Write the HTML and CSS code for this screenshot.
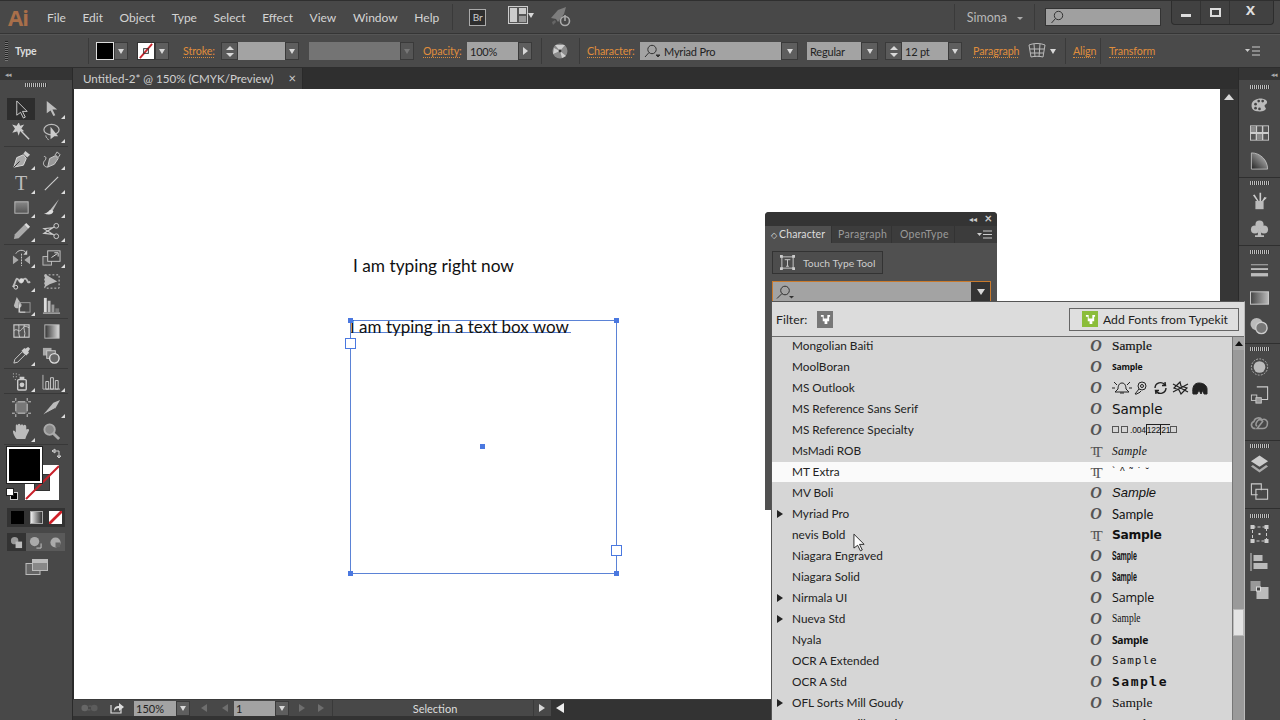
FILE: index.html
```html
<!DOCTYPE html>
<html lang="en">
<head>
<meta charset="utf-8">
<title>Illustrator</title>
<link rel="stylesheet" href="styles.css">
</head>
<body>
<div class="app">
  <header class="titlebar">
    <div class="logo">Ai</div>
    <nav class="menu"><span>File</span><span>Edit</span><span>Object</span><span>Type</span><span>Select</span><span>Effect</span><span>View</span><span>Window</span><span>Help</span></nav>
    <i class="vsep s1"></i>
    <div class="br">Br</div>
    <svg class="layout" viewBox="0 0 20 18"><rect x=".5" y=".5" width="19" height="17" fill="#555" stroke="#ccc"/><rect x="2" y="2" width="7" height="14" fill="#ccc"/><rect x="11" y="2" width="7" height="6" fill="#ccc"/><rect x="11" y="10" width="7" height="6" fill="#999"/></svg>
    <i class="tri lt"></i>
    <svg class="rocket" viewBox="0 0 22 20"><path d="M2 11 9 3l8-3-2 7-6 8-2-3z" fill="#7d7d7d"/><path d="M3 15l3-2 1 2-3 3z" fill="#666"/><circle cx="16" cy="14" r="4.500" fill="none" stroke="#aaa" stroke-width="1.600"/><path d="M16 8v6" stroke="#aaa" stroke-width="1.600"/></svg>
    <div class="grow"></div>
    <i class="vsep"></i>
    <span class="user">Simona</span><i class="tri tiny"></i>
    <i class="vsep s2"></i>
    <div class="search"><svg viewBox="0 0 14 14" class="glass"><circle cx="8.500" cy="5.500" r="4.200" fill="none" stroke="#333"/><path d="M5.500 8.500 1.500 13" stroke="#333"/></svg></div>
    <div class="winbtns">
      <div class="wb"><i class="w-min"></i></div>
      <div class="wb"><i class="w-max"></i></div>
      <div class="wb wx">x</div>
    </div>
  </header>

  <div class="controlbar">
    <i class="grip-v"></i>
    <span class="ctl-type">Type</span>
    <i class="vsep c1"></i>
    <div class="sw black"></div><div class="dd"><i class="tri"></i></div>
    <div class="sw none"><svg viewBox="0 0 17 17"><path d="M2 16 15 1" stroke="#c8242b" stroke-width="2"/><rect x="6" y="6" width="5" height="5" fill="none" stroke="#333"/></svg></div><div class="dd"><i class="tri"></i></div>
    <a class="lnk l31 m14">Stroke:</a>
    <div class="spin m7"><i class="tri up"></i><i class="tri"></i></div>
    <div class="fld w47"></div><div class="dd"><i class="tri"></i></div>
    <div class="fld dim w91 m10"></div><div class="dd dimdd"><i class="tri"></i></div>
    <a class="lnk l37 m9">Opacity:</a>
    <div class="fld w51 m7">100%</div><div class="dd"><i class="tri right"></i></div>
    <i class="vsep m9"></i>
    <svg class="globe" viewBox="0 0 16 16"><circle cx="8" cy="8" r="7.500" fill="#8a8a8a"/><path d="M8 8 3 2h10zM8 8l6 5-4 2zM8 8 1 11 2 5z" fill="#cfcfcf"/><circle cx="8" cy="8" r="1.400" fill="#333"/></svg>
    <i class="vsep m11"></i>
    <a class="lnk l45 m7">Character:</a>
    <div class="fld w141 m8"><svg viewBox="0 0 18 14" class="glass2"><circle cx="9" cy="5.500" r="4.200" fill="none" stroke="#333"/><path d="M6 8.500 2 13M13 11h4l-2 2z" stroke="#333" fill="#333"/></svg>Myriad Pro</div><div class="dd d17"><i class="tri"></i></div>
    <div class="fld w54 m9">Regular</div><div class="dd d17"><i class="tri"></i></div>
    <div class="spin m7"><i class="tri up"></i><i class="tri"></i></div>
    <div class="fld w46">12 pt</div><div class="dd"><i class="tri"></i></div>
    <a class="lnk l45 m11">Paragraph</a>
    <svg class="arc" viewBox="0 0 18 16"><path d="M1 2c5-2 11-2 16 0l-2 12c-4-1-8-1-12 0zM6 1l1 13M12 1l-1 13M2 6h14M2.500 10h13" fill="none" stroke="#bbb"/></svg>
    <i class="tri lt2"></i>
    <i class="vsep m9"></i>
    <a class="lnk l22 m7">Align</a>
    <i class="vsep m5"></i>
    <a class="lnk l44 m8">Transform</a>
    <div class="grow"></div>
    <svg class="panelmenu" viewBox="0 0 15 10"><path d="M0 3h5L2.500 6z" fill="#ccc"/><path d="M7 1h8M7 5h8M7 9h8" stroke="#ccc"/></svg>
  </div>

  <div class="workspace">
    <aside class="tools">
      <div class="collapse"><span>◂◂</span></div>
      <i class="grip"></i>
      <div class="tgroup g1">
        <div class="tool active"><svg viewBox="0 0 20 20"><path d="M5 1v15l4-3 3 6 2-1-3-6h5z" fill="#2e2e2e" stroke="#ccc"/></svg></div>
        <div class="tool c"><svg viewBox="0 0 20 20"><path d="M5 2v13l4-3 3 6 2-1-3-6h5z" fill="#bdbdbd"/></svg></div>
        <div class="tool"><svg viewBox="0 0 20 20"><path d="M7 1l1 3 3-1-2 3 2 2-3 0-1 3-1-3-4 1 2-3-2-3 3 1zM9 8l9 9" stroke="#ccc" stroke-width="1.500" fill="#ccc"/></svg></div>
        <div class="tool c"><svg viewBox="0 0 20 20"><ellipse cx="10" cy="7" rx="8" ry="5.500" fill="none" stroke="#bbb" stroke-width="1.300"/><path d="M4 13c0 3 2 3 3 5" fill="none" stroke="#bbb"/><path d="M9 4v13l4-3 4 0z" fill="#ccc"/></svg></div>
      </div>
      <div class="tgroup">
        <div class="tool c"><svg viewBox="0 0 20 20"><path d="M2 18 5 8l7-3 3 4-3 7z" fill="#aaa" stroke="#ddd"/><path d="M2 18l6-6" stroke="#333"/><path d="M12 4l2-3 5 4-3 3z" fill="#ccc"/></svg></div>
        <div class="tool c"><svg viewBox="0 0 20 20"><path d="M6 18 8 9l6-3 3 3-4 6z" fill="#999" stroke="#ccc"/><path d="M14 5l2-3 3 3-2 3zM6 18c-4 0-6-4-3-7 2-2 1-5-1-4" fill="none" stroke="#ccc"/></svg></div>
        <div class="tool t-text c"><span>T</span></div>
        <div class="tool c"><svg viewBox="0 0 20 20"><path d="M3 17 17 3" stroke="#ccc" stroke-width="1.200"/></svg></div>
        <div class="tool c"><svg viewBox="0 0 20 20"><defs><linearGradient id="g1" x1="0" y1="0" x2="0" y2="1"><stop offset="0" stop-color="#888"/><stop offset="1" stop-color="#555"/></linearGradient></defs><rect x="3" y="4" width="14" height="12" fill="url(#g1)" stroke="#bbb"/></svg></div>
        <div class="tool c"><svg viewBox="0 0 20 20"><path d="M18 1 9 12l2 2z" fill="#bbb"/><path d="M10 12c-3 0-3 4-8 4 4 2 9 2 10-2z" fill="#ddd"/></svg></div>
        <div class="tool c"><svg viewBox="0 0 20 20"><path d="M3 13 13 3l4 4L7 17l-5 1z" fill="#aaa"/><path d="M13 3l2-2 4 4-2 2z" fill="#ddd"/></svg></div>
        <div class="tool c"><svg viewBox="0 0 20 20"><circle cx="15" cy="4" r="2.500" fill="none" stroke="#ccc"/><circle cx="15" cy="15" r="2.500" fill="none" stroke="#ccc"/><path d="M13 5 2 12l10 1M13 14 2 7l9-1" fill="none" stroke="#ccc" stroke-width="1.200"/></svg></div>
      </div>
      <div class="tgroup">
        <div class="tool c"><svg viewBox="0 0 20 20"><path d="M1 8v9l6-4.500zM19 8v9l-6-4.500z" fill="#aaa"/><path d="M10 6v13" stroke="#ccc" stroke-dasharray="2 1"/><path d="M4 6c2-4 8-5 11-1" fill="none" stroke="#ccc"/><path d="M16 2v5h-4z" fill="#ccc"/></svg></div>
        <div class="tool c"><svg viewBox="0 0 20 20"><rect x="1" y="9" width="9" height="9" fill="#555" stroke="#bbb"/><rect x="6" y="3" width="13" height="11" fill="#444" stroke="#ccc"/><path d="M10 10l6-4M13 5h4v4" fill="none" stroke="#ddd"/></svg></div>
        <div class="tool c"><svg viewBox="0 0 20 20"><path d="M1 16c4-8 3-12 7-6 3 4 3-4 6-3s2 6 5 3" fill="none" stroke="#bbb" stroke-width="2"/><circle cx="4" cy="16" r="2" fill="#444" stroke="#ddd"/><circle cx="10" cy="9" r="2.500" fill="#ddd"/></svg></div>
        <div class="tool"><svg viewBox="0 0 20 20"><rect x="3" y="3" width="15" height="14" fill="none" stroke="#ccc" stroke-dasharray="2 2"/><path d="M3 2v14l5-3 8-3z" fill="#bbb"/></svg></div>
        <div class="tool c"><svg viewBox="0 0 20 20"><path d="M5 1l5 8c1 4-7 6-8 1z" fill="#bbb"/><rect x="7" y="7" width="12" height="10" fill="none" stroke="#999"/><path d="M8 9v8h6" fill="none" stroke="#ddd"/></svg></div>
        <div class="tool"><svg viewBox="0 0 20 20"><path d="M2 2h3v15H2z" fill="#ddd"/><path d="M6 5h3v12H6z" fill="#bbb"/><path d="M10 9h3v8h-3z" fill="#999"/><path d="M14 13h4v4h-4z" fill="#777"/><path d="M1 18h18" stroke="#ddd"/></svg></div>
      </div>
      <div class="tgroup">
        <div class="tool"><svg viewBox="0 0 20 20"><rect x="2" y="3" width="16" height="13" fill="#555" stroke="#ccc" stroke-width="1.200"/><path d="M2 9c4-3 5 3 8-1s4-4 8-2M7 3c1 3-1 6 1 13M13 3c-2 4 2 7 0 13" fill="none" stroke="#ccc"/></svg></div>
        <div class="tool"><svg viewBox="0 0 20 20"><defs><linearGradient id="g2"><stop offset="0" stop-color="#333"/><stop offset="1" stop-color="#ddd"/></linearGradient></defs><rect x="3" y="3" width="15" height="14" fill="url(#g2)" stroke="#bbb"/></svg></div>
        <div class="tool c"><svg viewBox="0 0 20 20"><path d="M2 18l1-4 8-8 3 3-8 8z" fill="none" stroke="#ccc"/><path d="M10 5l3-3 1 1 3-2 2 2-2 3 1 1-3 3z" fill="#ccc"/></svg></div>
        <div class="tool"><svg viewBox="0 0 20 20"><rect x="1" y="2" width="9" height="8" fill="#aaa"/><rect x="5" y="5" width="9" height="8" fill="#777" stroke="#ccc"/><circle cx="13" cy="13" r="5" fill="#666" stroke="#ddd" stroke-width="1.500"/></svg></div>
      </div>
      <div class="tgroup g0">
        <div class="tool c"><svg viewBox="0 0 20 20"><rect x="6" y="8" width="9" height="11" rx="1" fill="none" stroke="#ccc" stroke-width="1.500"/><circle cx="10.500" cy="13.500" r="2.500" fill="#ccc"/><rect x="8" y="5" width="5" height="3" fill="#ccc"/><path d="M1 2h1M4 2h1M1 5h1M4 5h1M7 3h1M3 8h1" stroke="#ccc"/></svg></div>
        <div class="tool c"><svg viewBox="0 0 20 20"><path d="M1 18V3M1 18h18" stroke="#bbb" fill="none"/><path d="M4 10h3v8H4zM9 6h3v12H9zM14 9h3v9h-3z" fill="none" stroke="#ccc"/></svg></div>
      </div>
      <div class="tgroup g2">
        <div class="tool"><svg viewBox="0 0 20 20"><rect x="4" y="4" width="12" height="12" fill="#777"/><path d="M0 4h3M6 4h8M17 4h3M0 16h3M6 16h8M17 16h3M4 0v3M4 6v8M4 17v3M16 0v3M16 6v8M16 17v3" stroke="#ccc"/></svg></div>
        <div class="tool c"><svg viewBox="0 0 20 20"><path d="M1 18 12 5l7-3-5 9z" fill="#bbb"/><path d="M1 18l13-7" stroke="#444"/></svg></div>
        <div class="tool c"><svg viewBox="0 0 20 20"><path d="M5 18c-2-2-4-6-4-8s2-1 3 1V4c0-2 2-2 2 0 0-3 3-3 3 0 0-2 3-2 3 0 1-2 3-1 3 1v3c1-1 3-1 3 1l-3 6-1 3z" fill="#bbb"/></svg></div>
        <div class="tool"><svg viewBox="0 0 20 20"><circle cx="8" cy="8" r="5.500" fill="#888" stroke="#aaa" stroke-width="2"/><path d="M12 12l6 6" stroke="#aaa" stroke-width="3"/></svg></div>
      </div>
      <div class="color">
        <div class="stroke-sw"><i class="hole"></i><svg viewBox="0 0 34 35"><path d="M1 34 34 1" stroke="#c8202a" stroke-width="2"/></svg></div>
        <div class="fill-sw"></div>
        <svg class="swap" viewBox="0 0 12 12"><path d="M1 3h7v6M1 3l3-2v4zM8 10l-2-2h4z" fill="none" stroke="#ccc"/></svg>
        <div class="def"><i></i><b></b></div>
      </div>
      <div class="modes"><div class="m"><i class="mb"></i></div><div class="m"><i class="mg"></i></div><div class="m"><i class="mn"><svg viewBox="0 0 12 12"><path d="M0 12 12 0" stroke="#d02028" stroke-width="2.500"/></svg></i></div></div>
      <div class="draw"><div class="d on"><svg viewBox="0 0 14 14"><circle cx="5" cy="5" r="4" fill="#999"/><rect x="6" y="6" width="7" height="7" fill="#bbb"/></svg></div><div class="d"><svg viewBox="0 0 14 14"><circle cx="6" cy="6" r="5" fill="#aaa"/><path d="M8 13h5V8" fill="none" stroke="#ccc"/></svg></div><div class="d"><svg viewBox="0 0 14 14"><circle cx="7" cy="7" r="5.500" fill="#aaa"/><rect x="7" y="7" width="5" height="5" fill="#666"/></svg></div></div>
      <svg class="screen" viewBox="0 0 22 16"><rect x=".5" y="4.500" width="14" height="11" fill="#666" stroke="#bbb"/><rect x="7" y=".5" width="15" height="11" fill="#888" stroke="#bbb"/><rect x="7.500" y="1" width="14" height="3" fill="#bbb"/></svg>
    </aside>

    <main class="doc">
      <div class="tabs"><div class="tab"><span>Untitled-2* @ 150% (CMYK/Preview)</span><b>×</b></div></div>
      <div class="canvas">
        <div class="artboard">
          <div class="line1">I am typing right now</div>
          <div class="textbox">
            <div class="line2">I am typing in a text box wow</div>
            <i class="h h-tl"></i><i class="h h-tr"></i><i class="h h-bl"></i><i class="h h-br"></i>
            <i class="port in"></i><i class="port out"></i><i class="center"></i>
          </div>
        </div>
        <div class="vscroll"><i class="tri up big"></i></div>
      </div>
      <footer class="status">
        <svg class="gear" viewBox="0 0 20 10"><circle cx="5" cy="5" r="3.500" fill="#666"/><circle cx="15" cy="5" r="3.500" fill="#5c5c5c"/><path d="M9 3h3M8 7h3" stroke="#666"/></svg>
        <svg class="share" viewBox="0 0 14 12"><path d="M1 3v8h10V7" fill="none" stroke="#ddd" stroke-width="1.200"/><path d="M4 9c0-4 2-5 5-5V1l5 4-5 4V6c-2 0-4 1-5 3z" fill="#ddd"/></svg>
        <div class="sfld s42">150%</div><div class="dd sdd"><i class="tri"></i></div>
        <div class="nav n1"><i class="tri left dimt"></i><i class="tri left dimt"></i></div>
        <div class="sfld s41">1</div><div class="dd sdd"><i class="tri"></i></div>
        <div class="nav n2"><i class="tri right dimt"></i><i class="tri right dimt"></i></div>
        <i class="vsep st"></i>
        <div class="selection">Selection</div>
        <i class="vsep st"></i>
        <i class="tri right sarrow"></i>
        <div class="hscroll"><i class="tri left white"></i></div>
      </footer>
      <div class="bottomgap"></div>
    </main>

    <aside class="dock">
      <div class="collapse rt"><span>◂◂</span></div>
      <div class="dgroup first">
        <i class="grip"></i>
        <div class="dc"><svg viewBox="0 0 24 20"><path d="M2 10c0-6 8-9 14-8s7 5 4 7-1 3 0 5-5 5-11 4-7-4-7-8z" fill="#bbb"/><circle cx="7" cy="9" r="1.700" fill="#444"/><circle cx="11" cy="5" r="1.700" fill="#444"/><circle cx="16" cy="5" r="1.700" fill="#444"/><circle cx="7" cy="14" r="1.700" fill="#444"/><circle cx="12" cy="15" r="1.700" fill="#444"/></svg></div>
        <div class="dc"><svg class="flat" viewBox="0 0 20 16"><rect width="20" height="16" fill="#ccc"/><path d="M1 1h5v6H1zM7.500 1h5v6h-5zM14 1h5v6h-5zM1 9h5v6H1zM7.500 9h5v6h-5zM14 9h5v6h-5z" fill="#555"/><path d="M7.500 9h5v6h-5zM1 1h5v6H1z" fill="#8a8a8a"/></svg></div>
        <div class="dc"><svg viewBox="0 0 20 20"><defs><linearGradient id="g3" x1="0" y1="1" x2="1" y2="0"><stop offset="0" stop-color="#222"/><stop offset="1" stop-color="#ccc"/></linearGradient></defs><path d="M1 1c10 0 18 8 18 18H1z" fill="url(#g3)" stroke="#bbb"/></svg></div>
      </div>
      <div class="dgroup">
        <i class="grip"></i>
        <div class="dc"><svg viewBox="0 0 20 22"><rect x="5" y="11" width="10" height="10" fill="#bbb"/><path d="M7 11 2 4l2-1 5 8zM10 11V1h2v10zM13 11l3-5 3 1-4 4z" fill="#ccc"/></svg></div>
        <div class="dc"><svg viewBox="0 0 20 20"><circle cx="10" cy="5" r="4.500" fill="#bbb"/><circle cx="5" cy="10.500" r="4.500" fill="#bbb"/><circle cx="15" cy="10.500" r="4.500" fill="#bbb"/><path d="M9 9h2l1 8h3v2H5v-2h3z" fill="#bbb"/></svg></div>
      </div>
      <div class="dgroup x2">
        <i class="grip"></i>
        <div class="dc"><svg viewBox="0 0 20 14"><path d="M1 1.500h18" stroke="#bbb"/><path d="M1 6h18" stroke="#bbb" stroke-width="2"/><path d="M1 12h18" stroke="#bbb" stroke-width="3.500"/></svg></div>
        <div class="dc"><svg viewBox="0 0 20 14"><defs><linearGradient id="g4"><stop offset="0" stop-color="#444"/><stop offset="1" stop-color="#bbb"/></linearGradient></defs><rect x=".5" y=".5" width="19" height="13" fill="url(#g4)" stroke="#ccc"/></svg></div>
        <div class="dc"><svg viewBox="0 0 20 18"><circle cx="7" cy="7" r="6.500" fill="#bbb"/><circle cx="12" cy="11" r="6" fill="#777" stroke="#ccc" stroke-width="1.500"/></svg></div>
      </div>
      <div class="dgroup x1">
        <i class="grip"></i>
        <div class="dc"><svg viewBox="0 0 20 20"><circle cx="10" cy="10" r="9" fill="none" stroke="#bbb" stroke-dasharray="2 1.500"/><circle cx="10" cy="10" r="6.500" fill="#bbb"/></svg></div>
        <div class="dc"><svg viewBox="0 0 20 20"><path d="M7 1h12v14H12" fill="none" stroke="#ccc" stroke-width="1.200"/><rect x="1" y="10" width="6" height="6" fill="none" stroke="#ccc"/><rect x="6" y="13" width="6" height="6" fill="#999" stroke="#ccc"/></svg></div>
        <div class="dc"><svg viewBox="0 0 24 18"><path d="M7 16C1 16 0 9 5 7c1-5 8-6 10-2 4-2 8 1 7 5 0 4-3 6-6 6H9l7-9c-2-3-5-3-7 0s-2 5 0 6" fill="none" stroke="#999" stroke-width="2"/></svg></div>
      </div>
      <div class="dgroup">
        <i class="grip"></i>
        <div class="dc"><svg viewBox="0 0 20 18"><path d="M10 0l9 6-9 6-9-6z" fill="#ccc"/><path d="M3 10l7 5 7-5 2 1.500L10 18 1 11.500z" fill="#aaa"/></svg></div>
        <div class="dc"><svg viewBox="0 0 20 20"><path d="M8 13H1V1h11v7" fill="none" stroke="#ccc" stroke-width="1.200"/><rect x="6" y="7" width="13" height="11" fill="none" stroke="#ccc" stroke-width="1.200"/></svg></div>
      </div>
      <div class="dgroup last">
        <i class="grip"></i>
        <div class="dc"><svg viewBox="0 0 18 18"><rect x="2" y="2" width="14" height="14" fill="none" stroke="#ccc" stroke-dasharray="3 2"/><path d="M0 0h4v4H0zM14 0h4v4h-4zM0 14h4v4H0zM14 14h4v4h-4z" fill="#ccc"/><rect x="8" y="8" width="2" height="2" fill="#ccc"/></svg></div>
        <div class="dc"><svg viewBox="0 0 18 18"><path d="M.5 0v18" stroke="#ccc"/><rect x="3" y="2" width="9" height="6" fill="#bbb"/><rect x="3" y="10" width="14" height="6" fill="#bbb"/></svg></div>
        <div class="dc"><svg viewBox="0 0 18 18"><rect x="0" y="0" width="10" height="10" fill="#999"/><rect x="6" y="6" width="12" height="12" fill="#bbb"/><rect x="6" y="6" width="4" height="4" fill="#444" stroke="#ddd"/></svg></div>
      </div>
    </aside>
  </div>

  <section class="charpanel">
    <div class="cp-head"><span class="cp-ctl">◂◂</span><span class="cp-x">×</span></div>
    <div class="cp-tabs">
      <div class="cp-tab on"><span class="updn">◇</span>Character</div>
      <div class="cp-tab">Paragraph</div>
      <div class="cp-tab">OpenType</div>
      <svg class="cp-menu" viewBox="0 0 15 9"><path d="M0 3h5L2.500 6z" fill="#ccc"/><path d="M6 1h9M6 4.500h9M6 8h9" stroke="#ccc"/></svg>
    </div>
    <div class="cp-body">
      <div class="touch"><svg viewBox="0 0 16 16"><rect x="2" y="2" width="12" height="12" fill="none" stroke="#ccc"/><path d="M0 0h3v3H0zM13 0h3v3h-3zM0 13h3v3H0zM13 13h3v3h-3z" fill="#ccc"/><path d="M5 5h6M8 5v7M6.500 12h3" stroke="#ccc"/></svg><span>Touch Type Tool</span></div>
      <div class="fontfield"><svg viewBox="0 0 20 14"><circle cx="10" cy="5.500" r="4.300" fill="none" stroke="#333"/><path d="M7 8.500 2 13.500" stroke="#333"/><path d="M14 11h5l-2.500 2.500z" fill="#333"/></svg><div class="ffbtn"><i class="tri"></i></div></div>
    </div>
  </section>

  <section class="popup">
    <div class="pop-head">
      <span class="filter">Filter:</span>
      <div class="filter-ic"><svg viewBox="0 0 12 12"><path d="M1 1h3v4h4V1h3v2h-1v5H8v3H5V8H3V3H1z" fill="#fff"/></svg></div>
      <div class="grow"></div>
      <button class="typekit"><i class="tk"><svg viewBox="0 0 12 12"><path d="M1 1h3v4h4V1h3v2h-1v5H8v3H5V8H3V3H1z" fill="#fff"/></svg></i>Add Fonts from Typekit</button>
    </div>
    <div class="pop-body">
      <div class="fontlist">
        <div class="row"><i class="ar"></i><span class="nm">Mongolian Baiti</span><span class="oi">O</span><span class="sp f-serif">Sample</span></div>
        <div class="row"><i class="ar"></i><span class="nm">MoolBoran</span><span class="oi">O</span><span class="sp f-tiny">Sample</span></div>
        <div class="row"><i class="ar"></i><span class="nm">MS Outlook</span><span class="oi">O</span><span class="sp">
          <svg class="dingbats" viewBox="0 0 96 14" fill="none" stroke="#222"><path d="M10 2c-3 0-4 3-4 6l-3 3h14l-3-3c0-3-1-6-4-6zM8 12h4M2 1l3 3M18 1l-3 3M0 7h3M17 7h3"/><circle cx="30" cy="5" r="4"/><circle cx="30" cy="5" r="1.500"/><path d="M27 8l-4 5h2l1-1h1l2-2"/><path d="M43 7a5.500 5.500 0 0 1 10-3M54 7a5.500 5.500 0 0 1-10 3M53 1l.5 3.500-3.500 0M44 13l-.5-3.500 3.500 0" stroke-width="1.400"/><path d="M62 7l6-6 1 4 6 2-6 6-2-4zM61 3l15 8M61 11 76 3" stroke-width="1.200"/><path d="M81 13c-1-7 1-11 6-11s8 3 8 6v5h-3l-1-4-2 4-2-4-2 4z" fill="#222"/></svg></span></div>
        <div class="row"><i class="ar"></i><span class="nm">MS Reference Sans Serif</span><span class="oi">O</span><span class="sp f-dv">Sample</span></div>
        <div class="row"><i class="ar"></i><span class="nm">MS Reference Specialty</span><span class="oi">O</span><span class="sp f-box"><i class="bx"></i><i class="bx"></i>.004<u>122</u><u>21</u><i class="bx"></i></span></div>
        <div class="row"><i class="ar"></i><span class="nm">MsMadi ROB</span><span class="tt">T<b>T</b></span><span class="sp f-script">Sample</span></div>
        <div class="row hi"><i class="ar"></i><span class="nm">MT Extra</span><span class="tt">T<b>T</b></span><span class="sp f-extra">` ^ ˜ ˙ ˘</span></div>
        <div class="row"><i class="ar"></i><span class="nm">MV Boli</span><span class="oi">O</span><span class="sp f-boli">Sample</span></div>
        <div class="row"><i class="ar on"></i><span class="nm">Myriad Pro</span><span class="oi">O</span><span class="sp f-my">Sample</span></div>
        <div class="row"><i class="ar"></i><span class="nm">nevis Bold</span><span class="tt">T<b>T</b></span><span class="sp f-nevis">Sample</span></div>
        <div class="row"><i class="ar"></i><span class="nm">Niagara Engraved</span><span class="oi">O</span><span class="sp f-narrow">Sample</span></div>
        <div class="row"><i class="ar"></i><span class="nm">Niagara Solid</span><span class="oi">O</span><span class="sp f-narrow">Sample</span></div>
        <div class="row"><i class="ar on"></i><span class="nm">Nirmala UI</span><span class="oi">O</span><span class="sp f-nir">Sample</span></div>
        <div class="row"><i class="ar on"></i><span class="nm">Nueva Std</span><span class="oi">O</span><span class="sp f-nueva">Sample</span></div>
        <div class="row"><i class="ar"></i><span class="nm">Nyala</span><span class="oi">O</span><span class="sp f-nyala">Sample</span></div>
        <div class="row"><i class="ar"></i><span class="nm">OCR A Extended</span><span class="oi">O</span><span class="sp f-ocr">Sample</span></div>
        <div class="row"><i class="ar"></i><span class="nm">OCR A Std</span><span class="oi">O</span><span class="sp f-ocrb">Sample</span></div>
        <div class="row"><i class="ar on"></i><span class="nm">OFL Sorts Mill Goudy</span><span class="oi">O</span><span class="sp f-ofl">Sample</span></div>
        <div class="row"><i class="ar"></i><span class="nm">OFL Sorts Mill Goudy TT</span><span class="tt">T<b>T</b></span><span class="sp f-ofl">Sample</span></div>
      </div>
      <div class="pscroll"><div class="pup"><i class="tri up blk"></i></div><div class="thumb"></div></div>
    </div>
  </section>

  <svg class="cursor" viewBox="0 0 14 20"><path d="M1 1v15l4-3 3 6 2-1-3-6h5z" fill="#fff" stroke="#222"/></svg>
</div>
</body>
</html>
```
FILE: styles.css
```css
*{box-sizing:border-box}
html,body{margin:0;padding:0;width:1280px;height:720px;overflow:hidden}
body{font-family:Lato,"Open Sans",sans-serif;font-size:12px;color:#d0d0d0;background:#2c2c2c}
i{display:block;font-style:normal}
svg{display:block}
.app{position:relative;width:1280px;height:720px;display:flex;flex-direction:column;overflow:hidden;background:#484848}
.grow{flex:1}

.tri{width:0;height:0;border-left:4px solid transparent;border-right:4px solid transparent;border-top:6px solid #d8d8d8;flex:none}
.tri.up{border-top:0;border-bottom:5px solid #d8d8d8}
.tri.right{border-top:4px solid transparent;border-bottom:4px solid transparent;border-left:6px solid #d8d8d8;border-right:0}
.tri.left{border-top:4px solid transparent;border-bottom:4px solid transparent;border-right:6px solid #d8d8d8;border-left:0}
.vsep{width:1px;height:26px;background:#3a3a3a;flex:none}

.titlebar{height:34px;display:flex;align-items:center;background:#484848;border-top:1px solid #2f2f2f;border-bottom:1px solid #353535;flex:none;position:relative}
.logo{width:47px;padding-left:8px;font-size:22px;font-weight:700;color:#a86f4a;letter-spacing:-1px;font-family:"Open Sans",sans-serif;line-height:30px}
.menu{display:flex;gap:16.600px;color:#d4d4d4;font-size:12px}
.s1{margin-left:13px}
.br{width:17px;height:17px;margin-left:16px;border:1px solid #aaa;background:#2e2e2e;font-size:10px;text-align:center;line-height:15px;color:#ccc}
.layout{width:20px;height:18px;margin:-4px 0 0 22px}
.lt{margin-left:0;border-left-width:3.500px;border-right-width:3.500px;border-top-width:5px;margin-top:-4px}
.rocket{width:22px;height:20px;margin-left:15px}
.user{margin-left:12px;font-size:12.500px;color:#b8b8b8}
.tiny{margin:2px 0 0 10px;border-left-width:3px;border-right-width:3px;border-top-width:3px;border-top-color:#aaa}
.s2{margin-left:11px}
.search{width:116px;height:18px;margin-left:10px;background:#a0a0a0;border:1px solid #333;margin-right:10px;padding:1px}
.glass{width:14px;height:14px;margin-left:3px}
.winbtns{display:flex;width:103px;height:24px;margin:-9px 6px 0 0;border:1px solid #2d2d2d;border-top:0;border-radius:0 0 4px 4px;background:#414141}
.wb{display:flex;align-items:center;justify-content:center;width:29px;border-right:1px solid #333}
.wb.wx{flex:1;border:0;font:700 17px/18px "Liberation Sans",sans-serif;color:#ddd;padding:0 2px 4px 0}
.w-min{width:10px;height:3px;background:#ddd;margin-top:6px}
.w-max{width:11px;height:9px;border:2px solid #ddd}

.controlbar{height:34px;display:flex;align-items:center;background:#4a4a4a;border-top:1px solid #555;border-bottom:1px solid #2e2e2e;flex:none}
.grip-v{width:3px;height:20px;margin-left:5px;background:repeating-linear-gradient(#222 0 1px,#777 1px 2px)}
.ctl-type{margin-left:7px;font-weight:700;font-size:10.500px;letter-spacing:-.3px;width:30px;color:#ddd}
.c1{margin-left:43px}
.sw{width:18px;height:18px;border:1px solid #ddd;flex:none}
.sw.black{background:#000;margin-left:7px}
.sw.none{background:#fff;border-color:#333;margin-left:9px}
.dd{width:14px;height:18px;background:#5e5e5e;border:1px solid #3a3a3a;display:flex;align-items:center;justify-content:center;flex:none}
.dd .tri{border-left-width:3.500px;border-right-width:3.500px;border-top-width:5px}
.dd .tri.right{border-top-width:4px;border-bottom-width:4px;border-left-width:5px;border-right:0}
.dd.d17{width:17px}
.dimdd{background:#555}
.dimdd .tri{border-top-color:#777}
.lnk{color:#e08e3c;font-size:10.700px;border-bottom:1px dotted #d98a3a;line-height:12px;flex:none;font-weight:400;letter-spacing:-.1px;white-space:nowrap}
.l31{width:31px}.l37{width:37px}.l45{width:45px}.l22{width:22px}.l44{width:44px}
.m5{margin-left:5px}.m7{margin-left:7px}.m8{margin-left:8px}.m9{margin-left:9px}.m10{margin-left:10px}.m11{margin-left:11px}.m14{margin-left:14px}
.spin{width:17px;height:18px;background:#5a5a5a;border:1px solid #3a3a3a;display:flex;flex-direction:column;align-items:center;justify-content:space-around;flex:none;padding:1px 0}
.spin .tri{border-left-width:4px;border-right-width:4px;border-top-width:4px}
.spin .tri.up{border-bottom-width:4px;border-top-width:0}
.fld{height:18px;background:#a3a3a3;color:#222;font-size:11px;letter-spacing:-.2px;display:flex;align-items:center;padding-left:3px;flex:none}
.fld.dim{background:#747474}
.w47{width:47px}.w91{width:91px}.w51{width:51px}.w141{width:141px}.w54{width:54px}.w46{width:46px}
.globe{width:16px;height:16px;margin-left:10px;flex:none}
.glass2{width:18px;height:14px;margin-right:3px}
.arc{width:18px;height:16px;margin-left:10px}
.lt2{margin-left:4px;border-left-width:3.500px;border-right-width:3.500px;border-top-width:5px}
.panelmenu{width:15px;height:10px;margin-right:20px}

.workspace{flex:1;display:flex;min-height:0}

.tools{width:73px;flex:none;background:#484848;border-right:1px solid #2a2a2a;display:flex;flex-direction:column;align-items:center;position:relative}
.collapse{align-self:stretch;height:12px;background:#343434;font-size:7px;line-height:12px;padding-left:5px;color:#aaa;letter-spacing:-1px}
.collapse.rt{text-align:right;padding-right:3px}
.grip{display:block;width:22px;height:4px;margin:3px auto 0;background:repeating-linear-gradient(90deg,#bbb 0 1px,#333 1px 2px)}
.tgroup{display:grid;grid-template-columns:30px 30px;grid-auto-rows:24px;padding:0 0 1px;border-bottom:1px solid #383838;width:64px;justify-content:center}
.tgroup.g1{margin-top:9px;padding-bottom:2px}
.tgroup.g0{padding-bottom:0}
.tgroup.g2{padding-top:1px;padding-bottom:1px}
.tool{position:relative;display:flex;align-items:center;justify-content:center}
.tool svg{width:19px;height:19px}
.tool.active{background:#2d2d2d;margin:2px 1px 0}
.tool.c::after{content:"";position:absolute;right:1px;bottom:1px;border-left:4px solid transparent;border-bottom:4px solid #ddd}
.t-text span{font:400 20px/20px "Liberation Serif",serif;color:#bcbcbc}

.color{position:relative;width:64px;height:61px;margin-top:2px}
.fill-sw{position:absolute;left:3px;top:0;width:35px;height:36px;background:#000;border:2px solid #fff;outline:1px solid #222}
.stroke-sw{position:absolute;left:21px;top:18px;width:34px;height:35px;background:#fff}
.stroke-sw svg{position:absolute;inset:0}
.hole{position:absolute;left:9px;top:9px;width:16px;height:17px;background:#484848;border:1px solid #333}
.swap{position:absolute;left:47px;top:1px;width:12px;height:12px}
.def{position:absolute;left:2px;top:41px;width:12px;height:12px}
.def i{position:absolute;right:0;bottom:0;width:8px;height:8px;background:#000;border:1px solid #ccc}
.def b{position:absolute;left:0;top:0;width:8px;height:8px;background:#fff;border:1px solid #222}
.modes,.draw{display:flex;width:58px;background:#333;padding:1px 2px;gap:3px;flex:none}
.modes{height:19px;justify-content:space-between}
.m{flex:1;display:flex;align-items:center;justify-content:center}
.m i{width:13px;height:13px}
.mb{background:#000}
.mg{background:linear-gradient(90deg,#eee,#333);border:1px solid #aaa}
.mn{background:#fff;overflow:hidden}
.draw{height:18px;margin-top:6px;background:#5a5a5a;padding:0;gap:0}
.d{flex:1;display:flex;align-items:center;justify-content:center}
.d.on{background:#333}
.d svg{width:13px;height:13px}
.screen{width:23px;height:16px;margin-top:8px}

.doc{flex:1;min-width:0;display:flex;flex-direction:column}
.tabs{height:21px;background:#2f2f2f;display:flex;flex:none}
.tab{width:230px;height:21px;background:#404040;border-right:1px solid #2a2a2a;display:flex;align-items:center;padding:0 6px 0 10px;color:#d0d0d0;font-size:11.600px;justify-content:space-between}
.tab b{font-size:13px;color:#ccc;font-weight:400;margin-top:-2px}
.canvas{flex:1;display:flex;min-height:0;background:#2a2a2a}
.artboard{flex:1;background:#fff;position:relative;margin-left:1px}
.vscroll{width:18px;background:#363636;display:flex;justify-content:center;padding-top:5px}
.big{border-left-width:5px!important;border-right-width:5px!important;border-bottom-width:6px!important;border-bottom-color:#ddd}
.line1{position:absolute;left:279px;top:165px;font:400 17.300px/24px Lato,sans-serif;color:#111;white-space:nowrap}
.textbox{position:absolute;left:276px;top:231px;width:267px;height:254px;border:1px solid #5b83d6}
.line2{position:absolute;left:-1px;top:-6px;width:221px;font:400 17px/24px Lato,sans-serif;color:#111;white-space:nowrap;border-bottom:1px solid #5b83d6;height:18px}
.h{position:absolute;width:5px;height:5px;background:#4a78e0}
.h-tl{left:-3px;top:-3px}.h-tr{right:-3px;top:-3px}.h-bl{left:-3px;bottom:-3px}.h-br{right:-3px;bottom:-3px}
.port{position:absolute;width:11px;height:11px;background:#fff;border:1px solid #4a78e0}
.port.in{left:-6px;top:17px}
.port.out{right:-6px;bottom:17px}
.center{position:absolute;left:129px;top:123px;width:5px;height:5px;background:#4a78e0}
.status{height:17px;display:flex;align-items:center;background:#484848;flex:none;border-top:1px solid #3a3a3a;padding-left:7px}
.gear{width:19px;height:10px}
.share{width:14px;height:12px;margin-left:11px}
.sfld{height:15px;background:#a3a3a3;color:#222;font-size:11px;padding-left:2px;line-height:16px;flex:none}
.s42{width:42px;margin-left:10px}.s41{width:41px;margin-left:6px}
.sdd{height:15px}
.nav{display:flex;justify-content:space-between;align-items:center;flex:none}
.n1{width:27px;margin-left:11px}.n2{width:25px;margin-left:10px}
.tri.left.dimt{border-right-color:#6e6e6e}
.tri.right.dimt{border-left-color:#6e6e6e}
.st{height:16px;margin-left:8px;background:#3a3a3a}
.selection{width:200px;text-align:center;font-size:11px;color:#ddd;padding-left:4px}
.selection+.st{margin-left:0}
.sarrow{margin-left:5px}
.hscroll{margin-left:6px;flex:1;height:16px;background:#333;padding:4px 0 0 5px}
.white{border-right-color:#eee!important;border-right-width:8px!important;border-top-width:5px!important;border-bottom-width:5px!important;margin-top:-1px}
.bottomgap{height:4px;background:#333;flex:none}

.dock{width:42px;flex:none;background:#484848;border-left:1px solid #2a2a2a}
.dgroup{border-bottom:1px solid #2f2f2f;padding:0 0 2px}
.dgroup.first{padding-top:2px}
.dgroup.x2{padding:1px 0 3px}
.dgroup.x1{padding-bottom:3px}
.dgroup.last{padding-top:2px;border-bottom:0}
.dgroup .grip{width:20px}
.dgroup .grip+.dc{margin-top:2px}
.dc{height:28px;display:flex;align-items:center;justify-content:center}
.dc svg{width:19px;height:18px}

.charpanel{position:absolute;left:765px;top:212px;width:232px;height:298px;background:#505050;border-radius:4px 4px 0 0;display:flex;flex-direction:column}
.cp-head{height:14px;background:#343434;border-radius:4px 4px 0 0;display:flex;justify-content:flex-end;gap:7px;padding-right:5px;font-size:8px;line-height:14px;color:#ccc;flex:none}
.cp-x{font-size:13px;line-height:13px;font-weight:700}
.cp-tabs{height:17px;background:#3c3c3c;display:flex;align-items:stretch;position:relative;flex:none;font-size:10.500px;letter-spacing:.3px}
.cp-tab{line-height:17px;color:#9a9a9a;border-right:1px solid #333;white-space:nowrap}
.cp-tab:nth-child(2){width:60px;padding-left:6px}
.cp-tab:nth-child(3){width:63px;padding-left:8px}
.cp-tab.on{background:#505050;color:#ddd;width:67px;padding:0 0 0 6px;letter-spacing:.1px}
.updn{font-size:8px;margin-right:2px}
.cp-menu{position:absolute;right:5px;top:4px;width:15px;height:9px}
.cp-body{padding:8px 6px 0 7px}
.touch{width:111px;height:23px;border:1px solid #333;background:#4d4d4d;display:flex;align-items:center;padding-left:7px;gap:8px;color:#ccc;font-size:10.300px;white-space:nowrap}
.touch svg{width:15px;height:15px}
.fontfield{width:219px;height:21px;margin-top:7px;background:#a3a3a3;border:1px solid #c97a2c;display:flex;align-items:center;justify-content:space-between;padding-left:2px}
.fontfield svg{width:20px;height:14px}
.ffbtn{width:19px;height:19px;background:#333;display:flex;align-items:center;justify-content:center}

.popup{position:absolute;left:771px;top:301px;width:474px;height:419px;display:flex;flex-direction:column;background:#d6d6d6;border:1px solid #555;border-right:1px solid #bbb;border-bottom:0;color:#111}
.pop-head{height:35px;background:#dcdcdc;border-bottom:1px solid #6e6e6e;display:flex;align-items:center;padding:0 5px 0 4px;position:relative;z-index:1;flex:none}
.filter{font-size:12.300px;color:#222}
.filter-ic{width:16px;height:17px;background:#777;margin-left:10px;display:flex;align-items:center;justify-content:center}
.filter-ic svg{width:11px;height:11px}
.typekit{width:170px;height:23px;background:#dfdfdf;border:1px solid #666;display:flex;align-items:center;padding:0 0 0 12px;font:400 12.200px Lato,sans-serif;color:#222;gap:5px;white-space:nowrap}
.tk{width:16px;height:16px;background:#8bbd3a;display:flex;align-items:center;justify-content:center}
.tk svg{width:11px;height:11px}
.pop-body{flex:1;display:flex;min-height:0;margin-top:-1px}
.fontlist{flex:1;overflow:hidden}
.row{height:21px;padding-bottom:2px;display:flex;align-items:center;position:relative;font-size:12px;color:#222;white-space:nowrap}
.row.hi{background:#fafafa;height:20px;margin-bottom:1px;padding-bottom:1px}
.ar{width:20px;flex:none}
.ar.on::before{content:"";display:block;margin-left:5px;border-top:4px solid transparent;border-bottom:4px solid transparent;border-left:6px solid #222;width:0;height:0}
.nm{width:292px;flex:none;font-size:11.800px}
.oi{width:24px;margin-right:4px;flex:none;text-align:center;font:italic 700 16px/21px "Liberation Serif",serif;color:#555}
.tt{width:24px;margin-right:4px;flex:none;text-align:center;position:relative;font:400 13px/21px "Liberation Serif",serif;color:#555;letter-spacing:-5px;padding-right:4px}
.tt b{font-weight:400;font-size:15px;position:relative;top:2px}
.sp{display:flex;align-items:center;color:#111}
.f-serif{font:400 13.300px "Liberation Serif",serif;-webkit-text-stroke:.2px #111}
.f-tiny{font:700 8.600px "Open Sans",sans-serif;letter-spacing:-.2px}
.dingbats{width:96px;height:14px}
.f-dv{font:400 13.500px "DejaVu Sans",sans-serif}
.f-box{font:400 8.500px "Liberation Sans",sans-serif;letter-spacing:-.2px}
.f-box u{text-decoration:none;border-top:1px solid #222;border-left:1px solid #222}
.bx{width:7px;height:7px;border:1px solid #555;margin-right:2px}
.f-script{font:italic 400 11.500px "Liberation Serif",serif;letter-spacing:.2px}
.f-extra{font:400 10px "Liberation Sans",sans-serif;letter-spacing:1px}
.f-boli{font:italic 400 13px "Liberation Sans",sans-serif}
.f-my{font:400 13px Lato,sans-serif}
.f-nevis{font:700 12.300px "DejaVu Sans",sans-serif;letter-spacing:-.3px}
.f-narrow{font:700 13px "Liberation Sans",sans-serif;transform:scaleX(.54);transform-origin:0 50%}
.f-nir{font:400 12.500px "Open Sans",sans-serif;letter-spacing:-.2px}
.f-nueva{font:400 12.500px "Liberation Serif",serif;transform:scaleX(.76);transform-origin:0 50%}
.f-nyala{font:700 10.300px "Open Sans",sans-serif;letter-spacing:-.3px}
.f-ocr{font:400 11px "DejaVu Sans Mono",monospace;letter-spacing:1px}
.f-ocrb{font:700 13px "DejaVu Sans Mono",monospace;letter-spacing:1.500px}
.f-ofl{font:400 13.500px "Liberation Serif",serif}
.pscroll{width:12px;flex:none;background:#9a9a9a;position:relative;border-left:1px solid #777;margin-top:1px}
.pup{height:13px;display:flex;justify-content:center;align-items:center;background:#a8a8a8}
.blk{border-bottom-color:#111!important}
.thumb{position:absolute;left:0;right:0;top:272px;height:27px;background:#e4e4e4;border:1px solid #bbb}

.cursor{position:absolute;left:853px;top:533px;width:13px;height:19px}
```
